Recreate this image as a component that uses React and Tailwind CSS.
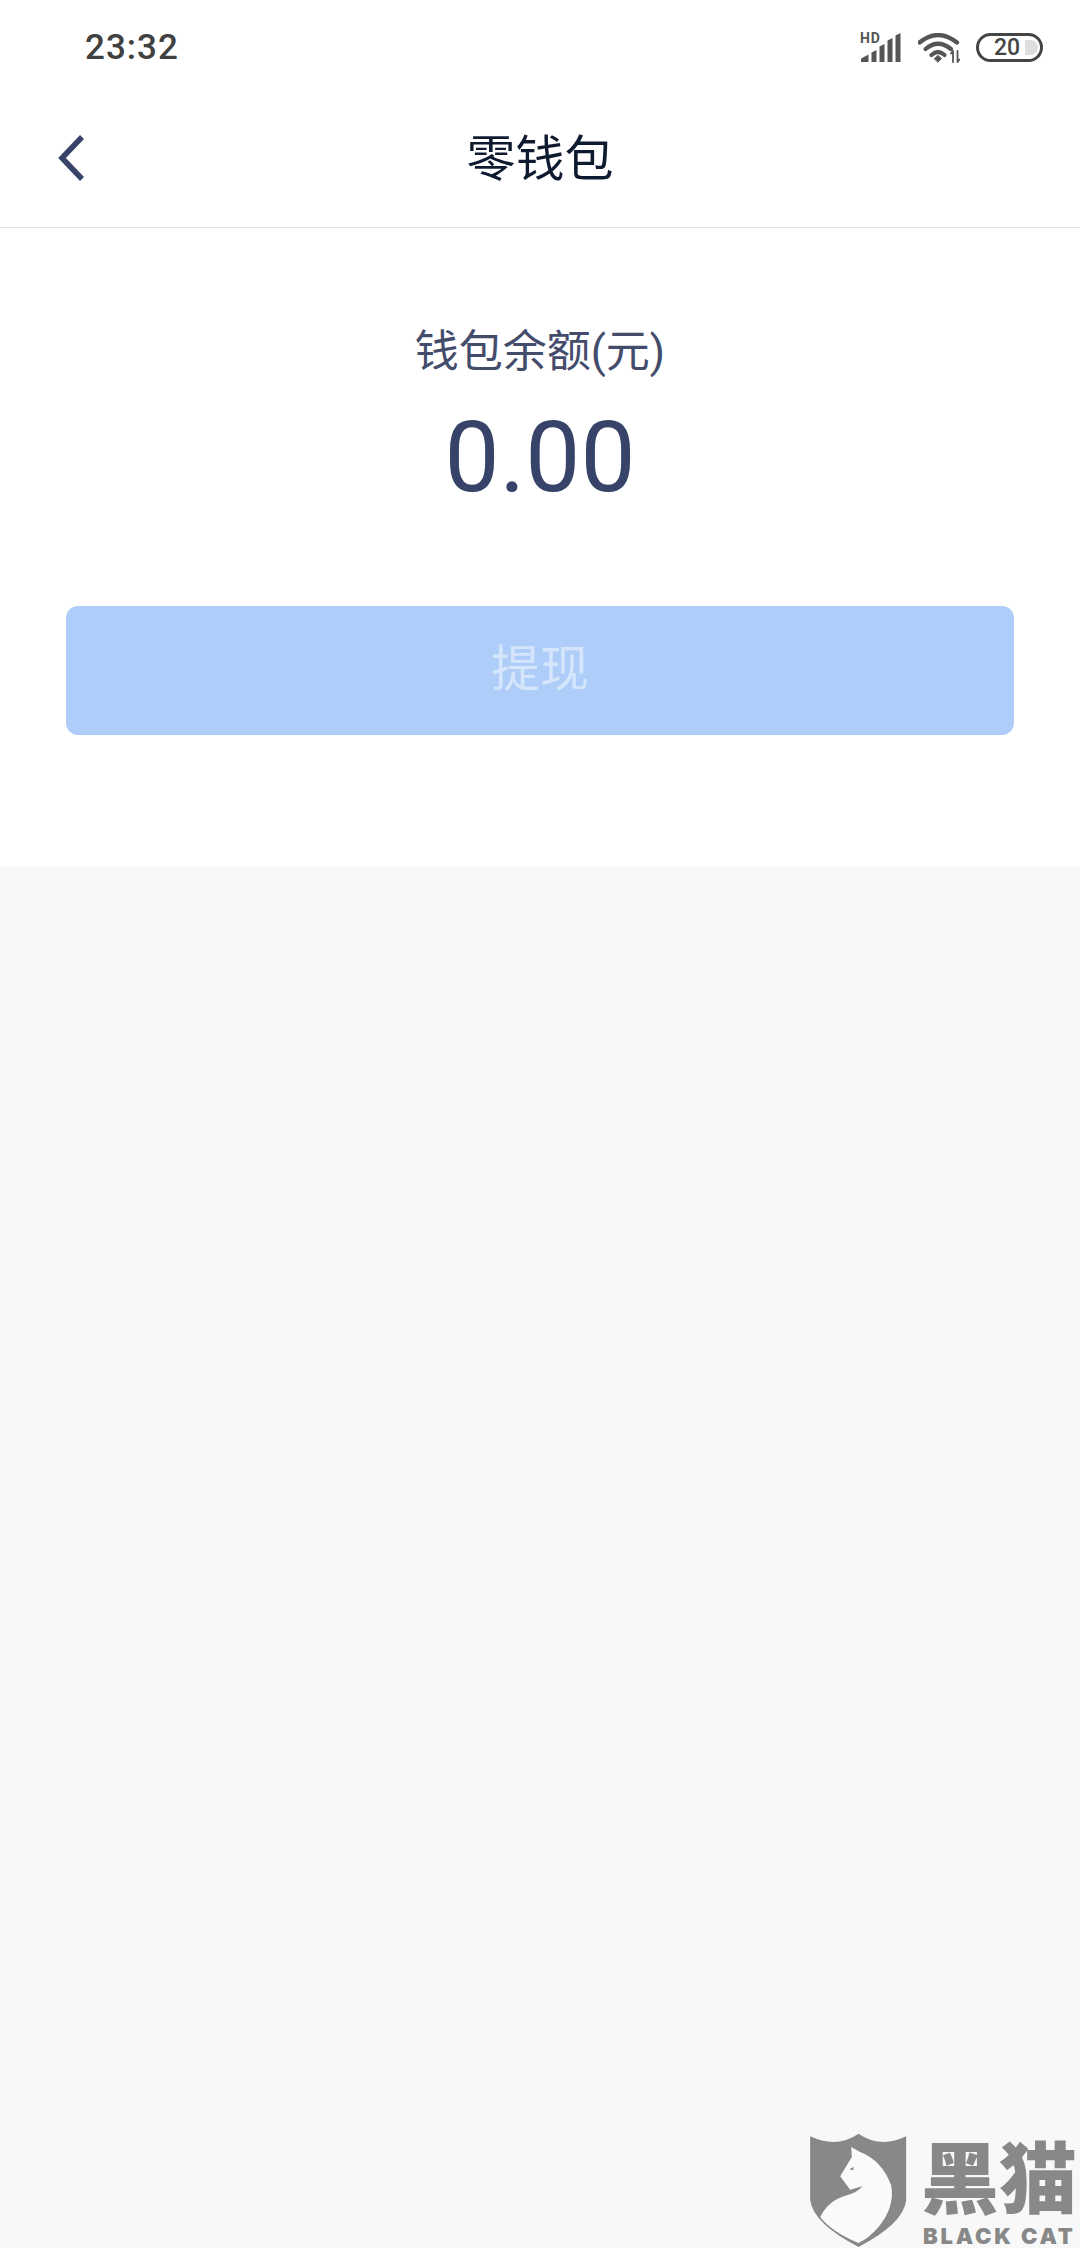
const cjk = { fontFamily: '"Roboto", "Noto Sans CJK SC", sans-serif' }

function SignalIcon() {
  return (
    <div className="relative h-[30px] w-[42px]">
      <span className="absolute top-[-2px] left-0 text-[14px] leading-[14px] font-bold tracking-[0.8px] text-[#555555]" style={cjk}>HD</span>
      <svg width="42" height="30" viewBox="0 0 42 30" fill="#555555">
        <path d="M1 29V26.5Q1 25.5 2 25L8.5 21.5V29Z" />
        <path d="M11.5 29V19.5L16.5 17V29Z" />
        <path d="M19.5 29V13.5L24.5 11V29Z" />
        <path d="M27.5 29V7.5L32.5 5V29Z" />
        <path d="M35.5 29V2.5L40.5 0V29Z" />
      </svg>
    </div>
  )
}

function WifiIcon() {
  return (
    <svg width="42" height="30" viewBox="0 0 42 30" fill="none" stroke="#555555" strokeLinecap="round">
      <path d="M1.5 9.5Q20 -5.5 39 9.5" strokeWidth="4.2" />
      <path d="M7.5 16Q20 5.5 33 16" strokeWidth="4.2" />
      <path d="M13.5 22Q20 16 26.5 22" strokeWidth="4.2" />
      <path d="M16.5 25.5L20 22.5L23.5 25.5L20 29Z" fill="#555555" strokeWidth="1" />
      <path d="M35 18V29M33 20.5L35 18M39.5 18V29M39.5 29L41.5 26.5" strokeWidth="1.8" />
    </svg>
  )
}

function Battery() {
  return (
    <div className="relative flex h-[29px] w-[67px] items-center rounded-full border-[3px] border-[#454545] pl-[15px]">
      <span className="text-[23px] leading-none font-medium text-[#454545]" style={cjk}>20</span>
      <div className="absolute top-[4px] right-[2px] h-[15px] w-[13px] rounded-r-full bg-[#dedede]" />
    </div>
  )
}

function BackArrow() {
  return (
    <svg width="30" height="50" viewBox="0 0 30 50" fill="none" stroke="#38436a" strokeWidth="5.5">
      <path d="M24 4L4 25L24 46" />
    </svg>
  )
}

function Watermark() {
  return (
    <div className="absolute right-0 bottom-0 flex h-[116px] w-[270px] items-start">
      <svg width="97" height="116" viewBox="95 65 290 348" className="shrink-0">
        <path d="M95 78Q175 115 240 70Q305 115 383 78V270Q375 340 240 410Q105 340 95 270Z" fill="#888888" />
        <path d="M218 110L245 125Q310 150 338 225Q350 290 300 350Q270 385 240 398Q160 365 125 320Q150 270 205 255Q235 248 252 228L215 238Q205 225 185 198L205 165L220 140Z" fill="#fafafa" />
        <path d="M212 177L226 170L224 180Z" fill="#888888" />
      </svg>
      <div className="ml-[16px] flex flex-col">
        <div className="mt-[4px] ml-[-2px] h-[76px] text-[78px] leading-[76px] font-black whitespace-nowrap text-[#888888]" style={{ fontFamily: '"Noto Sans CJK SC", sans-serif' }}>黑猫</div>
        <div className="mt-[14px] text-[22px] leading-[21px] font-black tracking-[2.8px] whitespace-nowrap text-[#888888]" style={{ fontFamily: 'Inter, sans-serif' }}>BLACK CAT</div>
      </div>
    </div>
  )
}

export default function App() {
  return (
    <div className="relative flex min-h-[2248px] flex-col overflow-hidden bg-[#f8f8f8]" style={cjk}>
      <div className="flex h-[91px] items-start justify-between bg-white pt-[33px] pr-[37px] pl-[85px]">
        <span className="text-[35px] leading-[30px] font-medium tracking-[1px] text-[#404040]">23:32</span>
        <div className="flex items-start gap-4">
          <SignalIcon />
          <WifiIcon />
          <Battery />
        </div>
      </div>

      <div className="relative flex h-[137px] items-center justify-center border-b border-[#e3e3e3] bg-white">
        <div className="absolute top-[42px] left-[58px]">
          <BackArrow />
        </div>
        <h1 className="pt-[2px] text-[49px] font-normal text-[#0e1a30]">零钱包</h1>
      </div>

      <div className="flex flex-col items-center bg-white pt-[94px] pb-[132px]">
        <div className="text-[44px] leading-[60px] text-[#444c6c]">钱包余额(元)</div>
        <div className="mt-[21px] text-[98px] leading-[110px] font-normal text-[#38436a]">0.00</div>
        <button className="mt-[93px] h-[129px] w-[948px] rounded-xl bg-[#aecdf8] pb-[2px] text-[49px] text-[#d5e5fb]">提现</button>
      </div>

      <Watermark />
    </div>
  )
}
